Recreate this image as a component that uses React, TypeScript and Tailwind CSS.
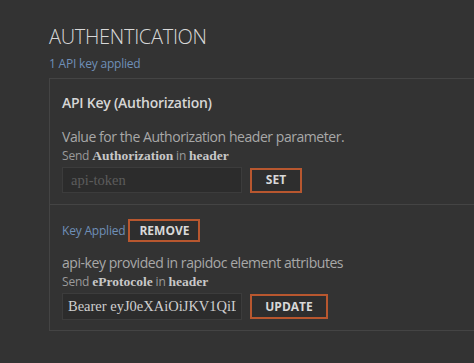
import React from "react";

const sans = { fontFamily: '"Open Sans", sans-serif' };

const App = () => {
  return (
    <div
      className="min-h-screen w-full bg-[#333333] pl-[49px] pt-[24px] overflow-hidden"
      style={sans}
    >
      <h1 className="text-[20px] font-light text-[#d8d8d8] leading-[26px] tracking-[-0.3px]">
        AUTHENTICATION
      </h1>
      <div className="text-[12px] text-[#6f8fb8] mt-[6px] leading-[16px] tracking-[-0.2px]">
        1 API key applied
      </div>

      <div className="mt-[6px] w-[600px] border border-[#444444]">
        <div className="px-[12px] pt-[14px] pb-[11px] border-b border-[#444444]">
          <div className="text-[14px] font-semibold text-[#d6d6d6] leading-[20px] tracking-[-0.25px]">
            API Key (Authorization)
          </div>
          <div className="mt-[14px] text-[14px] text-[#a8a8a8] leading-[20px] tracking-[-0.45px]">
            Value for the Authorization header parameter.
          </div>
          <div className="text-[12px] text-[#9a9a9a] leading-[18px] tracking-[-0.2px]">
            Send{" "}
            <span className="font-bold text-[#c8c8c8] font-['Liberation_Serif',serif] text-[13.5px] tracking-normal">
              Authorization
            </span>{" "}
            in{" "}
            <span className="font-bold text-[#c8c8c8] font-['Liberation_Serif',serif] text-[13.5px] tracking-normal">
              header
            </span>
          </div>
          <div className="mt-[2px] flex items-center gap-[8px]">
            <input
              placeholder="api-token"
              className="w-[180px] h-[26px] bg-[#2c2c2c] border border-[#3c3c3c] px-[8px] text-[14.5px] text-[#cfcfcf] placeholder:text-[#5c5c5c] outline-none font-['Liberation_Serif',serif]"
            />
            <button className="w-[52px] h-[25px] border-2 border-[#b8572f] bg-[#2e2e2e] text-[12px] font-bold text-[#d8d8d8]">
              SET
            </button>
          </div>
        </div>

        <div className="px-[12px] pt-[14px] pb-[10px]">
          <div className="flex items-center gap-[3px]">
            <span className="text-[12px] text-[#6f8fb8] tracking-[-0.2px]">Key Applied</span>
            <button className="w-[72px] h-[23px] border-2 border-[#b8572f] bg-[#2e2e2e] text-[12px] font-bold text-[#d8d8d8]">
              REMOVE
            </button>
          </div>
          <div className="mt-[11px] text-[14px] text-[#a8a8a8] leading-[20px] tracking-[-0.45px]">
            api-key provided in rapidoc element attributes
          </div>
          <div className="text-[12px] text-[#9a9a9a] leading-[18px] tracking-[-0.2px]">
            Send{" "}
            <span className="font-bold text-[#c8c8c8] font-['Liberation_Serif',serif] text-[13.5px] tracking-normal">
              eProtocole
            </span>{" "}
            in{" "}
            <span className="font-bold text-[#c8c8c8] font-['Liberation_Serif',serif] text-[13.5px] tracking-normal">
              header
            </span>
          </div>
          <div className="mt-[2px] flex items-center gap-[8px]">
            <input
              defaultValue="Bearer eyJ0eXAiOiJKV1QiLCJhbGciOiJIUzI1NiJ9"
              className="w-[180px] h-[27px] bg-[#2c2c2c] border border-[#3c3c3c] px-[5px] text-[14.5px] text-[#cfcfcf] outline-none font-['Liberation_Serif',serif]"
            />
            <button className="w-[78px] h-[25px] border-2 border-[#b8572f] bg-[#2e2e2e] text-[12px] font-bold text-[#d8d8d8]">
              UPDATE
            </button>
          </div>
        </div>
      </div>
    </div>
  );
};

export default App;
